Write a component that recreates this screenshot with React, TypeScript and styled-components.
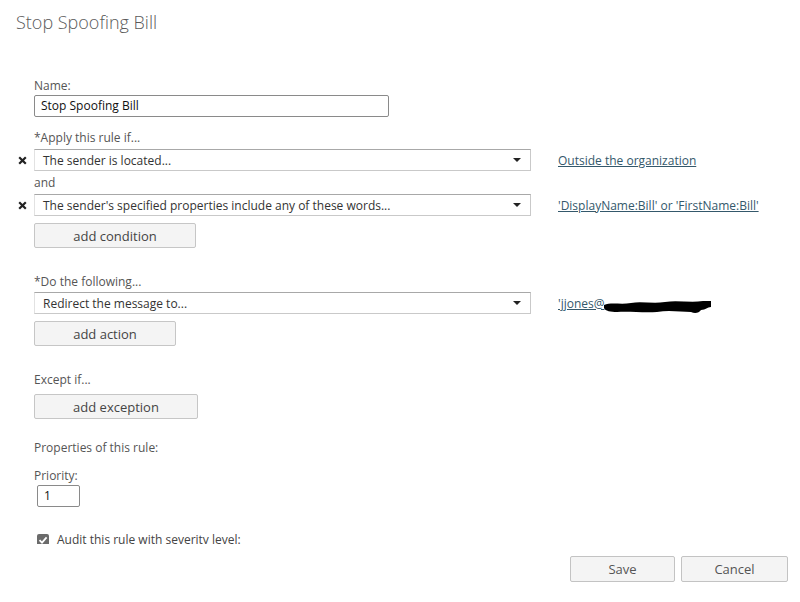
import styled, { createGlobalStyle } from "styled-components";

const GlobalStyle = createGlobalStyle`
  html, body {
    margin: 0;
    padding: 0;
    background: #ffffff;
  }
  body {
    font-family: "Open Sans", "Liberation Sans", sans-serif;
    color: #444;
  }
`;

const Page = styled.div`
  width: 800px;
  height: 602px;
  display: flex;
  flex-direction: column;
  overflow: hidden;
`;

const Title = styled.h1`
  margin: 8px 0 0 16px;
  font-size: 18px;
  line-height: 28px;
  font-weight: 300;
  color: #5a5a5a;
`;

const Body = styled.div`
  height: 508px;
  overflow: hidden;
  padding-left: 34px;
  box-sizing: border-box;
`;

const Label = styled.div<{ $top: number }>`
  margin-top: ${p => p.$top}px;
  font-size: 12px;
  line-height: 16px;
  color: #555;
`;

const TextInput = styled.div<{ $width: number; $left?: number }>`
  margin-top: 1px;
  margin-left: ${p => p.$left ?? 0}px;
  width: ${p => p.$width}px;
  height: 22px;
  box-sizing: border-box;
  border: 1px solid #8a8a8a;
  border-radius: 2px;
  padding: 0 6px;
  font-size: 12px;
  line-height: 20px;
  color: #111;
`;

const RuleRow = styled.div<{ $top: number }>`
  display: grid;
  grid-template-columns: 18px 497px auto;
  align-items: center;
  margin-left: -18px;
  margin-top: ${p => p.$top}px;
`;

const RemoveBtn = styled.span`
  display: flex;
  justify-content: center;
  width: 12px;
  svg {
    display: block;
  }
`;

const Select = styled.div`
  height: 22px;
  box-sizing: border-box;
  border: 1px solid #c9c9c9;
  border-top-color: #a8a8a8;
  border-left-color: #e2e2e2;
  display: flex;
  align-items: center;
  padding: 0 9px 0 8px;
  font-size: 12px;
  color: #333;
  span {
    flex: 1;
  }
`;

const Caret = styled.i`
  width: 0;
  height: 0;
  border-left: 4px solid transparent;
  border-right: 4px solid transparent;
  border-top: 4px solid #222;
`;

const ValueLink = styled.a`
  margin-left: 27px;
  height: 22px;
  font-size: 12px;
  color: #34586b;
  text-decoration: underline;
  white-space: nowrap;
  display: flex;
  align-items: center;
  svg {
    flex: none;
  }
`;

const Button = styled.button<{ $width: number; $top: number }>`
  display: block;
  margin-top: ${p => p.$top}px;
  width: ${p => p.$width}px;
  height: 25px;
  box-sizing: border-box;
  background: #f4f4f4;
  border: 1px solid #c6c6c6;
  border-radius: 2px;
  font-family: inherit;
  font-size: 13px;
  color: #444;
  padding: 0;
`;

const CheckRow = styled.div`
  display: flex;
  align-items: center;
  gap: 8px;
  margin-top: 25px;
  margin-left: 3px;
  font-size: 12px;
  line-height: 16px;
  color: #444;
`;

const Check = styled.span`
  width: 12px;
  height: 12px;
  border-radius: 2px;
  background: #6b6b6b;
  display: flex;
  align-items: center;
  justify-content: center;
`;

const Footer = styled.div`
  display: flex;
  justify-content: flex-end;
  gap: 6px;
  padding: 12px 12px 0 0;
`;

const FooterButton = styled.button<{ $width: number }>`
  width: ${p => p.$width}px;
  height: 26px;
  box-sizing: border-box;
  background: #f4f4f4;
  border: 1px solid #c3c3c3;
  border-radius: 2px;
  font-family: inherit;
  font-size: 13px;
  color: #555;
`;

function XIcon() {
  return (
    <svg width="9" height="9" viewBox="0 0 9 9">
      <path d="M1.2 1.2 L7.8 7.8 M7.8 1.2 L1.2 7.8" stroke="#222" strokeWidth="2.2" strokeLinecap="butt" />
    </svg>
  );
}

function Redaction() {
  return (
    <svg width="110" height="26" viewBox="0 0 110 26" style={{ marginLeft: -1 }}>
      <path
        d="M1 15 C8 12 18 15 28 13 C38 11 50 14 62 12 C74 10 88 13 100 11 L108 11 L108 17 C104 17 103 20 98 20 C96 23 92 24 88 22 C78 22 66 20 54 22 C40 23 26 21 14 22 C8 22 2 21 1 18 Z"
        fill="#000"
      />
    </svg>
  );
}

type Rule = { text: string; value: React.ReactNode; removable: boolean };

function RuleLine({ rule, top }: { rule: Rule; top: number }) {
  return (
    <RuleRow $top={top}>
      <RemoveBtn>{rule.removable && <XIcon />}</RemoveBtn>
      <Select>
        <span>{rule.text}</span>
        <Caret />
      </Select>
      <ValueLink>{rule.value}</ValueLink>
    </RuleRow>
  );
}

export default function App() {
  return (
    <Page>
      <GlobalStyle />
      <Title>Stop Spoofing Bill</Title>
      <Body>
        <Label $top={42}>Name:</Label>
        <TextInput $width={355}>Stop Spoofing Bill</TextInput>

        <Label $top={13}>*Apply this rule if...</Label>
        <RuleLine top={3} rule={{ text: "The sender is located...", value: "Outside the organization", removable: true }} />
        <Label $top={4}>and</Label>
        <RuleLine
          top={3}
          rule={{
            text: "The sender's specified properties include any of these words...",
            value: "'DisplayName:Bill' or 'FirstName:Bill'",
            removable: true,
          }}
        />
        <Button $width={162} $top={7}>add condition</Button>

        <Label $top={26}>*Do the following...</Label>
        <RuleLine
          top={2}
          rule={{
            text: "Redirect the message to...",
            value: (
              <>
                'jjones@
                <Redaction />
              </>
            ),
            removable: false,
          }}
        />
        <Button $width={142} $top={7}>add action</Button>

        <Label $top={26}>Except if...</Label>
        <Button $width={164} $top={6}>add exception</Button>

        <Label $top={21}>Properties of this rule:</Label>
        <Label $top={12}>Priority:</Label>
        <TextInput $width={43} $left={3}>1</TextInput>

        <CheckRow>
          <Check>
            <svg width="10" height="10" viewBox="0 0 10 10">
              <path d="M1.5 5.2 L4 7.6 L8.6 2.4" stroke="#fff" strokeWidth="1.8" fill="none" />
            </svg>
          </Check>
          Audit this rule with severity level:
        </CheckRow>
      </Body>
      <Footer>
        <FooterButton $width={105}>Save</FooterButton>
        <FooterButton $width={107}>Cancel</FooterButton>
      </Footer>
    </Page>
  );
}
